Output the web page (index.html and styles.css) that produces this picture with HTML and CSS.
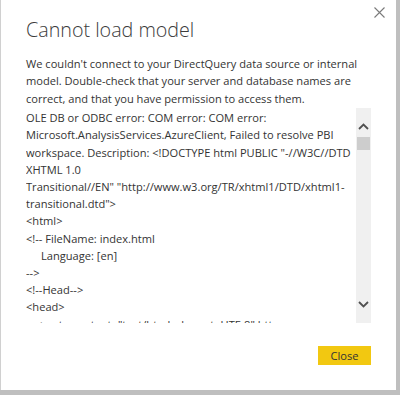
FILE: index.html
```html
<!DOCTYPE html>
<html lang="en">
<head>
<meta charset="utf-8">
<title>Cannot load model</title>
<link rel="stylesheet" href="styles.css">
</head>
<body>
<div class="dialog">
  <div class="header">
    <h1 class="title">Cannot load model</h1>
    <button class="close-x" aria-label="Close">
      <svg width="11" height="11" viewBox="0 0 11 11"><path d="M0.5 0.5 L10.5 10.5 M10.5 0.5 L0.5 10.5" stroke="#7a7a7a" stroke-width="1.1" fill="none"/></svg>
    </button>
  </div>
  <p class="message">We couldn't connect to your DirectQuery data source or internal<br>model. Double-check that your server and database names are<br>correct, and that you have permission to access them.</p>
  <div class="details">
    <div class="details-text">
<div class="line">OLE DB or ODBC error: COM error: COM error:</div>
<div class="line">Microsoft.AnalysisServices.AzureClient, Failed to resolve PBI</div>
<div class="line">workspace. Description: &lt;!DOCTYPE html PUBLIC "-//W3C//DTD</div>
<div class="line">XHTML 1.0</div>
<div class="line">Transitional//EN" "http://www.w3.org/TR/xhtml1/DTD/xhtml1-</div>
<div class="line">transitional.dtd"&gt;</div>
<div class="line">&lt;html&gt;</div>
<div class="line">&lt;!-- FileName: index.html</div>
<div class="line indent">Language: [en]</div>
<div class="line">--&gt;</div>
<div class="line">&lt;!--Head--&gt;</div>
<div class="line">&lt;head&gt;</div>
<div class="line indent-sm">&lt;meta content="text/html; charset=UTF-8" http-</div>
    </div>
    <div class="scrollbar">
      <svg class="arrow arrow-up" width="11" height="7" viewBox="0 0 11 7"><path d="M1 6 L5.5 1.5 L10 6" stroke="#505050" stroke-width="1.8" fill="none"/></svg>
      <div class="thumb"></div>
      <div class="track"></div>
      <svg class="arrow arrow-down" width="11" height="7" viewBox="0 0 11 7"><path d="M1 1 L5.5 5.5 L10 1" stroke="#505050" stroke-width="1.8" fill="none"/></svg>
    </div>
  </div>
  <div class="footer">
    <button class="btn-close">Close</button>
  </div>
</div>
</body>
</html>
```
FILE: styles.css
```css
html, body {
  margin: 0;
  padding: 0;
  background: #bfbfbf;
}
body {
  width: 400px;
  height: 395px;
  overflow: hidden;
  font-family: "Open Sans", "Noto Sans", sans-serif;
}
.dialog {
  box-sizing: border-box;
  width: 396px;
  height: 390px;
  background: #fff;
  border-left: 1px solid #d0d0d0;
  display: flex;
  flex-direction: column;
  padding: 0 25px 0 25px;
}
.header {
  display: flex;
  justify-content: space-between;
  align-items: flex-start;
  margin-right: -14px;
}
.title {
  margin: 17px 0 0 0;
  font-weight: 300;
  font-size: 19.7px;
  line-height: 26px;
  color: #3c3c3c;
  letter-spacing: 0;
}
.close-x {
  margin-top: 7px;
  padding: 0;
  border: 0;
  background: none;
  width: 11px;
  height: 11px;
  display: block;
}
.close-x svg { display: block; }
.message {
  margin: 12px 0 0 0;
  font-size: 11.1px;
  line-height: 17.4px;
  color: #333;
  white-space: nowrap;
}
.details {
  display: flex;
  margin-top: 1px;
  height: 215px;
  gap: 4px;
}
.details-text {
  flex: 1;
  overflow: hidden;
  font-size: 11.1px;
  line-height: 17.2px;
  color: #333;
  padding-top: 1px;
}
.line { white-space: nowrap; }
.indent { padding-left: 15px; }
.indent-sm { padding-left: 10px; }
.scrollbar {
  width: 15px;
  background: #f0f0f0;
  display: flex;
  flex-direction: column;
  align-items: center;
}
.arrow { display: block; }
.arrow-up { margin-top: 14.5px; }
.arrow-down { margin-bottom: 15.5px; }
.thumb {
  width: 13px;
  height: 13px;
  background: #cdcdcd;
  margin-top: 7.5px;
}
.track { flex: 1; }
.footer {
  display: flex;
  justify-content: flex-end;
  margin-top: 23px;
}
.btn-close {
  width: 53px;
  height: 19px;
  border: 0;
  background: #f2c811;
  color: #333;
  font-family: "Open Sans", sans-serif;
  font-size: 11.1px;
  padding: 0;
  line-height: 19px;
}
```
